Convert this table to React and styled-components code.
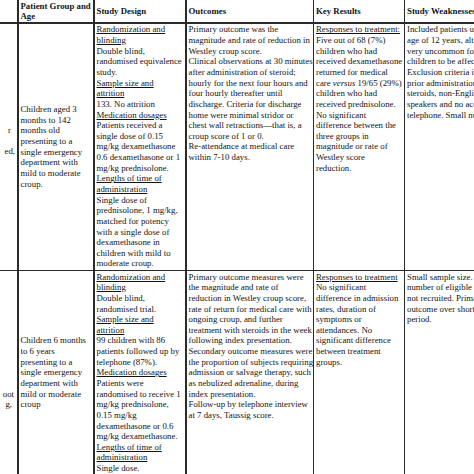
import { createGlobalStyle, styled } from "styled-components";

const GlobalStyle = createGlobalStyle`
  html, body {
    margin: 0;
    padding: 0;
    background: #ffffff;
    overflow: hidden;
  }
  body {
    font-family: "Liberation Serif", "Times New Roman", serif;
    color: #141414;
  }
`;

const rows = [
  {
    stubTop: 101,
    stub: [["r", 6], ["", 0], ["ed,", 2]],
    patient: [
      "Children aged 3", "months to 142", "months old", "presenting to a",
      "single emergency", "department with", "mild to moderate", "croup.",
    ],
    design: [
      { u: "Randomization and" }, { u: "blinding" }, "Double blind,",
      "randomised equivalence", "study.", { u: "Sample size and" },
      { u: "attrition" }, "133. No attrition", { u: "Medication dosages" },
      "Patients received a", "single dose of 0.15", "mg/kg dexamethasone",
      "0.6 dexamethasone or 1", "mg/kg prednisolone.",
      { u: "Lengths of time of" }, { u: "administration" }, "Single dose of",
      "prednisolone, 1 mg/kg,", "matched for potency", "with a single dose of",
      "dexamethasone in", "children with mild to", "moderate croup.",
    ],
    outcomes: [
      "Primary outcome was the", "magnitude and rate of reduction in",
      "Westley croup score.", "Clinical observations at 30 minutes",
      "after administration of steroid;", "hourly for the next four hours and",
      "four hourly thereafter until", "discharge. Criteria for discharge",
      "home were minimal stridor or", "chest wall retractions\u2014that is, a",
      "croup score of 1 or 0.", "Re-attendance at medical care",
      "within 7-10 days.",
    ],
    results: [
      { u: "Responses to treatment:" }, "Five out of 68 (7%)",
      "children who had", "received dexamethasone", "returned for medical",
      { pre: "care ", i: "versus", post: " 19/65 (29%)" }, "children who had",
      "received prednisolone.", "No significant", "difference between the",
      "three groups in", "magnitude or rate of", "Westley score",
      "reduction.",
    ],
    weak: [
      "Included patients up to the", "age of 12 years, although it is",
      "very uncommon for", "children to be affected.",
      "Exclusion criteria included", "prior administration of",
      "steroids, non-English", "speakers and no access to a",
      "telephone. Small number",
    ],
  },
  {
    stubTop: 117.5,
    stub: [["oot", 3], ["g,", 5]],
    patient: [
      "Children 6 months", "to 6 years", "presenting to a",
      "single emergency", "department with", "mild or moderate", "croup",
    ],
    design: [
      { u: "Randomization and" }, { u: "blinding" }, "Double blind,",
      "randomised trial.", { u: "Sample size and" }, { u: "attrition" },
      "99 children with 86", "patients followed up by", "telephone (87%).",
      { u: "Medication dosages" }, "Patients were", "randomised to receive 1",
      "mg/kg prednisolone,", "0.15 mg/kg", "dexamethasone or 0.6",
      "mg/kg dexamethasone.", { u: "Lengths of time of" },
      { u: "administration" }, "Single dose.",
    ],
    outcomes: [
      "Primary outcome measures were", "the magnitude and rate of",
      "reduction in Westley croup score,",
      "rate of return for medical care with", "ongoing croup, and further",
      "treatment with steroids in the week", "following index presentation.",
      "Secondary outcome measures were",
      "the proportion of subjects requiring",
      "admission or salvage therapy, such", "as nebulized adrenaline, during",
      "index presentation.", "Follow-up by telephone interview",
      "at 7 days, Taussig score.",
    ],
    results: [
      { u: "Responses to treatment" }, "No significant",
      "difference in admission", "rates, duration of", "symptoms or",
      "attendances. No", "significant difference", "between treatment",
      "groups.",
    ],
    weak: [
      "Small sample size. Large", "number of eligible patients",
      "not recruited. Primary", "outcome over short", "period.",
    ],
  },
];

const Table = styled.div`
  display: grid;
  grid-template-columns: 17px 74.5px 90.5px 126px 89.5px 200px;
  gap: 1.5px;
  background: #2a2a2a;
  width: max-content;
  font-size: 8.8px;
  line-height: 10.64px;
`;

const Cell = styled.div`
  background: #ffffff;
  padding: ${({ $head }) => ($head ? "0.5px 2px 0.5px" : "0.6px 2px 0.4px")};
  display: flex;
  flex-direction: column;
  justify-content: ${({ $middle }) => ($middle ? "center" : "flex-start")};
  font-weight: ${({ $head }) => ($head ? 700 : 400)};
  overflow: hidden;
`;

const StubCell = styled(Cell)`
  padding: ${({ $top }) => $top}px 0 0;
  align-items: flex-end;
`;

const Line = styled.span`
  display: block;
  white-space: nowrap;
  padding-right: ${({ $pr }) => $pr || 0}px;
`;

const Under = styled.span`
  text-decoration: underline;
  text-underline-offset: 1px;
`;

const Ital = styled.span`
  font-style: italic;
`;

function Lines({ items }) {
  return items.map((it, i) => {
    if (typeof it === "string") return <Line key={i}>{it}</Line>;
    if (it.u) return <Line key={i}><Under>{it.u}</Under></Line>;
    return (
      <Line key={i}>
        {it.pre}<Ital>{it.i}</Ital>{it.post}
      </Line>
    );
  });
}

function RowCells({ row }) {
  return (
    <>
      <StubCell $top={row.stubTop}>
        {row.stub.map(([t, pr], i) => (
          <Line key={i} $pr={pr}>{t || "\u00a0"}</Line>
        ))}
      </StubCell>
      <Cell $middle><Lines items={row.patient} /></Cell>
      <Cell><Lines items={row.design} /></Cell>
      <Cell><Lines items={row.outcomes} /></Cell>
      <Cell><Lines items={row.results} /></Cell>
      <Cell><Lines items={row.weak} /></Cell>
    </>
  );
}

export default function App() {
  return (
    <>
      <GlobalStyle />
      <Table>
        <Cell $head />
        <Cell $head $middle>
          <Line>Patient Group and</Line>
          <Line>Age</Line>
        </Cell>
        <Cell $head $middle><Line>Study Design</Line></Cell>
        <Cell $head $middle><Line>Outcomes</Line></Cell>
        <Cell $head $middle><Line>Key Results</Line></Cell>
        <Cell $head $middle><Line>Study Weaknesses</Line></Cell>

        {rows.map((r, idx) => (
          <RowCells key={idx} row={r} />
        ))}
      </Table>
    </>
  );
}
